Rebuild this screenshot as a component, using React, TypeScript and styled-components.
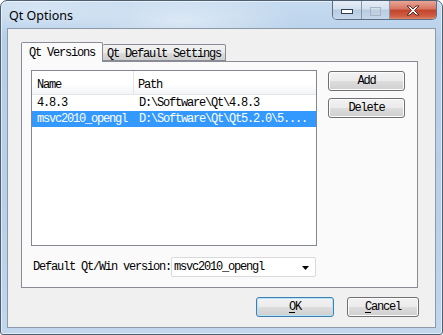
import React from "react";
import styled, { createGlobalStyle } from "styled-components";

const mono = `"Liberation Mono", "DejaVu Sans Mono", monospace`;

const GlobalStyle = createGlobalStyle`
  html, body {
    margin: 0;
    padding: 0;
    background: #ffffff;
  }
  body {
    width: 443px;
    height: 335px;
    overflow: hidden;
  }
  * {
    box-sizing: border-box;
  }
`;

const versions = [
  { name: "4.8.3", path: "D:\\Software\\Qt\\4.8.3" },
  { name: "msvc2010_opengl", path: "D:\\Software\\Qt\\Qt5.2.0\\5...." },
];

const App = () => {
  return (
    <>
      <GlobalStyle />
      <Window>
        <TitleBar>
          <Title>Qt Options</Title>
          <CaptionGroup>
            <CaptionButton $w={29}>
              <svg width="12" height="5" viewBox="0 0 12 5">
                <rect x="0.5" y="0.5" width="11" height="4" fill="#fff" stroke="#2f3d4e" />
              </svg>
            </CaptionButton>
            <CaptionButton $w={28}>
              <svg width="11" height="9" viewBox="0 0 11 9">
                <rect x="0.5" y="0.5" width="10" height="8" fill="none" stroke="#a7b4c4" />
                <rect x="2.5" y="3.5" width="6" height="3" fill="none" stroke="#c4cfdb" />
              </svg>
            </CaptionButton>
            <CloseButton>
              <svg width="14" height="11" viewBox="0 0 14 11">
                <path
                  d="M1 1 L4 1 L7 4 L10 1 L13 1 L8.5 5.5 L13 10 L10 10 L7 7 L4 10 L1 10 L5.5 5.5 Z"
                  fill="#fff"
                  stroke="#5a2a22"
                  strokeWidth="1"
                  strokeLinejoin="round"
                />
              </svg>
            </CloseButton>
          </CaptionGroup>
        </TitleBar>
        <Client>
          <TabBar>
            <Tab $active>Qt Versions</Tab>
            <Tab>Qt Default Settings</Tab>
          </TabBar>
          <Pane>
            <TopRow>
              <ListView>
                <HeaderRow>
                  <HeaderCell $w={102}>Name</HeaderCell>
                  <HeaderCell>Path</HeaderCell>
                </HeaderRow>
                {versions.map((v, i) => (
                  <Row key={v.name} $selected={i === 1}>
                    <Cell $w={102}>{v.name}</Cell>
                    <Cell>{v.path}</Cell>
                  </Row>
                ))}
              </ListView>
              <SideButtons>
                <PushButton>Add</PushButton>
                <PushButton>Delete</PushButton>
              </SideButtons>
            </TopRow>
            <DefaultRow>
              <Label>Default Qt/Win version:</Label>
              <Combo>
                <span>msvc2010_opengl</span>
                <svg width="7" height="4" viewBox="0 0 7 4">
                  <path d="M0 0 L7 0 L3.5 4 Z" fill="#000" />
                </svg>
              </Combo>
            </DefaultRow>
          </Pane>
          <DialogButtons>
            <PushButton $default $w={78}>
              <u>O</u>K
            </PushButton>
            <PushButton $w={72}>
              <u>C</u>ancel
            </PushButton>
          </DialogButtons>
        </Client>
      </Window>
    </>
  );
};

const Window = styled.div`
  width: 443px;
  height: 335px;
  display: flex;
  flex-direction: column;
  padding: 0 6px 6px 6px;
  border: 1px solid #4f5f72;
  border-radius: 7px 7px 3px 3px;
  background:
    radial-gradient(ellipse 120px 30px at 180px 20px, rgba(255, 255, 255, 0.45), transparent),
    radial-gradient(ellipse 90px 25px at 40px 10px, rgba(255, 255, 255, 0.35), transparent),
    linear-gradient(180deg, #c6dbf0 0%, #b6cfe9 12%, #b9d0e8 60%, #c2d6ec 100%);
  box-shadow: inset 0 0 0 1px rgba(255, 255, 255, 0.55);
`;

const TitleBar = styled.div`
  height: 27px;
  display: flex;
  align-items: flex-start;
  justify-content: space-between;
`;

const Title = styled.div`
  margin: 7px 0 0 2px;
  font-family: "Noto Sans", "Open Sans", sans-serif;
  font-size: 12.5px;
  line-height: 15px;
  color: #000;
`;

const CaptionGroup = styled.div`
  display: flex;
  height: 19px;
  margin-right: -1px;
  border: 1px solid #5e6f84;
  border-top: none;
  border-radius: 0 0 5px 5px;
  overflow: hidden;
`;

const CaptionButton = styled.div<{ $w: number }>`
  width: ${(p) => p.$w}px;
  display: flex;
  align-items: center;
  justify-content: center;
  padding-top: 2px;
  border-right: 1px solid #8396ab;
  background: linear-gradient(180deg, #e6eef7 0%, #d3e0ee 45%, #b7cbe0 50%, #c6d7ea 100%);
`;

const CloseButton = styled.div`
  width: 46px;
  display: flex;
  align-items: center;
  justify-content: center;
  padding-top: 1px;
  background: linear-gradient(180deg, #e7a697 0%, #d6735e 45%, #c2432b 50%, #cf5f45 85%, #dd8a6c 100%);
`;

const Client = styled.div`
  flex: 1;
  display: flex;
  flex-direction: column;
  padding: 13px 17px 10px 13px;
  border: 1px solid #8c99a9;
  background: #f0f0f0;
`;

const TabBar = styled.div`
  display: flex;
  align-items: flex-end;
  height: 20px;
  position: relative;
  z-index: 1;
  margin-bottom: -1px;
`;

const Tab = styled.div<{ $active?: boolean }>`
  height: ${(p) => (p.$active ? "20px" : "17px")};
  padding: ${(p) => (p.$active ? "3px 7px 0 7px" : "2px 4px 0 4px")};
  margin-bottom: ${(p) => (p.$active ? "0" : "1px")};
  border: 1px solid #898c95;
  border-bottom: ${(p) => (p.$active ? "none" : "1px solid #898c95")};
  border-left: ${(p) => (p.$active ? "1px solid #898c95" : "none")};
  border-radius: 2px 2px 0 0;
  background: ${(p) =>
    p.$active ? "#fafafa" : "linear-gradient(180deg, #f2f2f2 0%, #ebebeb 50%, #dddddd 51%, #cfcfcf 100%)"};
  font-family: ${mono};
  font-size: 12px;
  letter-spacing: -1.2px;
  line-height: 15px;
  white-space: nowrap;
  color: #000;
`;

const Pane = styled.div`
  height: 227px;
  display: flex;
  flex-direction: column;
  gap: 11px;
  padding: 8px 12px 10px 9px;
  border: 1px solid #898c95;
  background: #fafafa;
`;

const TopRow = styled.div`
  display: flex;
  gap: 11px;
  align-items: flex-start;
`;

const ListView = styled.div`
  width: 286px;
  height: 176px;
  border: 1px solid #828790;
  background: #fff;
  overflow: hidden;
`;

const HeaderRow = styled.div`
  display: flex;
  height: 24px;
  border-bottom: 1px solid #e5e5e5;
  background: linear-gradient(180deg, #ffffff 0%, #ffffff 55%, #f3f4f6 100%);
`;

const HeaderCell = styled.div<{ $w?: number }>`
  width: ${(p) => (p.$w ? `${p.$w}px` : "auto")};
  flex: ${(p) => (p.$w ? "none" : "1")};
  padding: 7px 0 0 ${(p) => (p.$w ? 5 : 4)}px;
  border-right: ${(p) => (p.$w ? "1px solid #e5e5e5" : "none")};
  font-family: ${mono};
  font-size: 12px;
  letter-spacing: -1.2px;
  line-height: 15px;
  color: #000;
`;

const Row = styled.div<{ $selected?: boolean }>`
  display: flex;
  height: 16px;
  background: ${(p) => (p.$selected ? "#3399ff" : "transparent")};
  color: ${(p) => (p.$selected ? "#fff" : "#000")};
`;

const Cell = styled.div<{ $w?: number }>`
  width: ${(p) => (p.$w ? `${p.$w}px` : "auto")};
  flex: ${(p) => (p.$w ? "none" : "1")};
  padding: 1px 0 0 5px;
  font-family: ${mono};
  font-size: 12px;
  letter-spacing: -1.2px;
  line-height: 15px;
  white-space: nowrap;
  overflow: hidden;
`;

const SideButtons = styled.div`
  display: flex;
  flex-direction: column;
  gap: 7px;
  margin-top: 1px;
`;

const PushButton = styled.div<{ $default?: boolean; $w?: number }>`
  width: ${(p) => p.$w ?? 77}px;
  height: 20px;
  display: flex;
  align-items: center;
  justify-content: center;
  border: 1px solid ${(p) => (p.$default ? "#3c7fb1" : "#707070")};
  border-radius: 3px;
  background: linear-gradient(180deg, #f2f2f2 0%, #ebebeb 49%, #dddddd 50%, #cfcfcf 100%);
  box-shadow: inset 0 0 0 1px ${(p) => (p.$default ? "#b8e3f8" : "#fcfcfc")};
  font-family: ${mono};
  font-size: 12px;
  letter-spacing: -1.2px;
  line-height: 15px;
  color: #000;

  u {
    text-underline-offset: 2px;
  }
`;

const DefaultRow = styled.div`
  display: flex;
  align-items: center;
  height: 20px;
`;

const Label = styled.div`
  width: 140px;
  padding-left: 2px;
  font-family: ${mono};
  font-size: 12px;
  letter-spacing: -1.2px;
  line-height: 15px;
  white-space: nowrap;
  color: #000;
`;

const Combo = styled.div`
  width: 145px;
  height: 20px;
  display: flex;
  align-items: center;
  justify-content: space-between;
  padding: 0 6px 0 2px;
  border: 1px solid #dadada;
  border-radius: 2px;
  background: #fff;
  font-family: ${mono};
  font-size: 12px;
  letter-spacing: -1.2px;
  line-height: 15px;
  color: #000;

  svg {
    margin-top: 2px;
  }
`;

const DialogButtons = styled.div`
  display: flex;
  justify-content: flex-end;
  gap: 13px;
  margin-top: 9px;
  margin-right: -1px;
`;

export default App;
